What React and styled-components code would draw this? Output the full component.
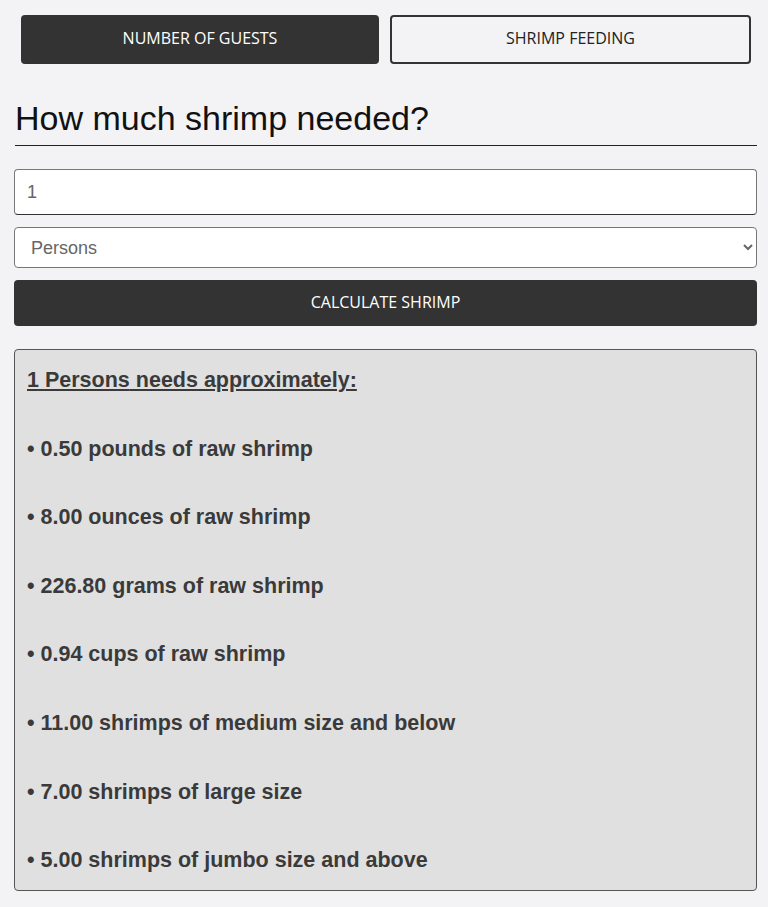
import { useState } from 'react'
import styled, { createGlobalStyle } from 'styled-components'

const GlobalStyle = createGlobalStyle`
    body {
        margin: 0;
        background-color: #f3f3f5;
        font-family: 'Liberation Sans', Arial, sans-serif;
    }
`

const Page = styled.div`
    padding: 15px 11px 17px 14px;
`

const Tabs = styled.div`
    display: flex;
    gap: 11px;
    padding: 0 6px 0 7px;
`

const Tab = styled.button`
    flex: ${p => (p.$active ? '358px' : '361px')};
    height: 49px;
    padding: 0 0 3px;
    border-radius: 4px;
    border: 2px solid #333;
    background-color: ${p => (p.$active ? '#333' : 'transparent')};
    color: ${p => (p.$active ? '#fff' : '#222')};
    font-family: 'Open Sans', sans-serif;
    font-size: 16px;
    text-transform: uppercase;
    cursor: pointer;
`

const Title = styled.h1`
    margin: 35px 0 23px 1px;
    padding-bottom: 7px;
    border-bottom: 1px solid #222;
    font-size: 34px;
    font-weight: normal;
    color: #111;
`

const Form = styled.div`
    display: flex;
    flex-direction: column;
    gap: 12px;
`

const Input = styled.input`
    box-sizing: border-box;
    height: 46px;
    padding: 0 12px;
    border: 1px solid #777;
    border-bottom-color: #333;
    border-radius: 4px;
    background: #fff;
    font-family: 'Liberation Sans', Arial, sans-serif;
    font-size: 18px;
    color: #666;
    outline: none;
`

const Select = styled.select`
    box-sizing: border-box;
    height: 41px;
    padding: 0 12px;
    border: 1px solid #777;
    border-radius: 4px;
    background: #fff;
    font-family: 'Liberation Sans', Arial, sans-serif;
    font-size: 18px;
    color: #666;
    outline: none;
`

const CalcButton = styled.button`
    height: 46px;
    padding: 0 0 2px;
    border: none;
    border-radius: 4px;
    background-color: #333;
    color: #fff;
    font-family: 'Open Sans', sans-serif;
    font-size: 16px;
    text-transform: uppercase;
    cursor: pointer;
`

const Result = styled.div`
    margin-top: 23px;
    padding: 19px 12px 18px;
    border: 1px solid #555;
    border-radius: 4px;
    background-color: #e0e0e0;
    color: #3a3a3a;
    font-family: 'Liberation Sans', Arial, sans-serif;
    font-weight: bold;
    font-size: 21.5px;
    line-height: 23px;
    display: flex;
    flex-direction: column;
    gap: 45.6px;
`

const ResultTitle = styled.div`
    text-decoration: underline;
`

const Item = styled.div``

const units = {
    Persons: 1,
}

const App = () => {
    const [tab, setTab] = useState('guests')
    const [count, setCount] = useState('1')
    const [unit, setUnit] = useState('Persons')

    const n = (parseFloat(count) || 0) * units[unit]
    const pounds = n * 0.5
    const items = [
        `${pounds.toFixed(2)} pounds of raw shrimp`,
        `${(pounds * 16).toFixed(2)} ounces of raw shrimp`,
        `${(pounds * 453.6).toFixed(2)} grams of raw shrimp`,
        `${(pounds * 1.88).toFixed(2)} cups of raw shrimp`,
        `${(n * 11).toFixed(2)} shrimps of medium size and below`,
        `${(n * 7).toFixed(2)} shrimps of large size`,
        `${(n * 5).toFixed(2)} shrimps of jumbo size and above`,
    ]

    return (
        <Page>
            <GlobalStyle />
            <Tabs>
                <Tab $active={tab === 'guests'} onClick={() => setTab('guests')}>Number of guests</Tab>
                <Tab $active={tab === 'feeding'} onClick={() => setTab('feeding')}>Shrimp feeding</Tab>
            </Tabs>
            <Title>How much shrimp needed?</Title>
            <Form>
                <Input value={count} onChange={e => setCount(e.target.value)} />
                <Select value={unit} onChange={e => setUnit(e.target.value)}>
                    <option>Persons</option>
                </Select>
                <CalcButton>Calculate shrimp</CalcButton>
            </Form>
            <Result>
                <ResultTitle>{count} {unit} needs approximately:</ResultTitle>
                {items.map(t => <Item key={t}>• {t}</Item>)}
            </Result>
        </Page>
    )
}

export default App
